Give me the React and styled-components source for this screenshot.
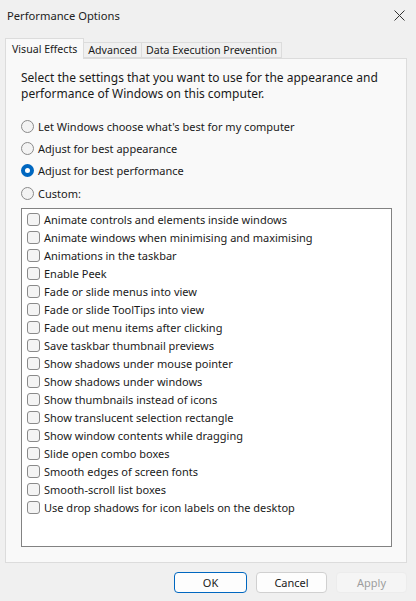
import React from 'react';
import styled, { createGlobalStyle } from 'styled-components';

const Global = createGlobalStyle`
  html, body { margin: 0; padding: 0; }
  body {
    width: 416px;
    height: 601px;
    overflow: hidden;
    background: #f0f0f0;
    font-family: "Noto Sans", "Segoe UI", sans-serif;
    font-size: 11px;
    color: #1a1a1a;
  }
`;

const Window = styled.div`
  width: 416px;
  height: 601px;
  display: flex;
  flex-direction: column;
  background: #f0f0f0;
  box-sizing: border-box;
`;

const TitleBar = styled.div`
  height: 31px;
  display: flex;
  align-items: center;
  justify-content: space-between;
  padding: 0 11px 0 7px;
  font-size: 11.2px;
  color: #222;
`;

const Close = styled.svg`
  width: 11px;
  height: 11px;
`;

const Body = styled.div`
  padding: 7px 9px 0 5px;
  display: flex;
  flex-direction: column;
`;

const Tabs = styled.div`
  display: flex;
  align-items: flex-end;
  height: 20px;
  position: relative;
  z-index: 1;
  font-size: 10.6px;
`;

const Tab = styled.div`
  height: ${p => (p.$active ? '21px' : '16px')};
  padding: 0 ${p => (p.$active ? '6px' : '4px')};
  margin-left: ${p => (p.$active ? '0' : '-1px')};
  margin-bottom: ${p => (p.$active ? '-1px' : '0')};
  display: flex;
  align-items: center;
  box-sizing: border-box;
  border: 1px solid #dcdcdc;
  border-bottom: ${p => (p.$active ? 'none' : '1px solid #dcdcdc')};
  background: ${p => (p.$active ? '#f9f9f9' : '#f0f0f0')};
  color: #1a1a1a;
`;

const Panel = styled.div`
  height: 505px;
  box-sizing: border-box;
  background: #f9f9f9;
  border: 1px solid #dcdcdc;
  padding: 11px 14px 0 15px;
  display: flex;
  flex-direction: column;
`;

const Intro = styled.p`
  margin: 0 0 13px;
  font-size: 12px;
  line-height: 16px;
`;

const RadioRow = styled.label`
  display: flex;
  align-items: center;
  height: 22.4px;
  gap: 4px;
`;

const Radio = styled.span`
  width: 13px;
  height: 13px;
  box-sizing: border-box;
  border-radius: 50%;
  border: ${p => (p.$on ? '4px solid #0067c0' : '1px solid #8a8a8a')};
  background: ${p => (p.$on ? '#fff' : '#f3f3f3')};
`;

const List = styled.div`
  margin-top: 3px;
  height: 339px;
  box-sizing: border-box;
  background: #fff;
  border: 1px solid #828282;
  padding: 2px 0 0 5px;
`;

const Item = styled.div`
  display: flex;
  align-items: center;
  height: 18px;
  gap: 4px;
`;

const Box = styled.span`
  width: 13px;
  height: 13px;
  box-sizing: border-box;
  border: 1px solid #8a8a8a;
  border-radius: 3px;
  background: #f4f4f4;
`;

const Footer = styled.div`
  display: flex;
  justify-content: flex-end;
  gap: 9px;
  padding: 9px 9px 0 0;
`;

const Button = styled.div`
  width: ${p => (p.$primary ? '73px' : '71px')};
  height: 21px;
  box-sizing: border-box;
  display: flex;
  align-items: center;
  justify-content: center;
  border-radius: 4px;
  border: 1px solid ${p => (p.$primary ? '#0067c0' : p.$disabled ? '#ececec' : '#d0d0d0')};
  background: ${p => (p.$disabled ? '#f5f5f5' : '#fdfdfd')};
  color: ${p => (p.$disabled ? '#9d9d9d' : '#1a1a1a')};
`;

const radios = [
  "Let Windows choose what's best for my computer",
  'Adjust for best appearance',
  'Adjust for best performance',
  'Custom:',
];

const items = [
  'Animate controls and elements inside windows',
  'Animate windows when minimising and maximising',
  'Animations in the taskbar',
  'Enable Peek',
  'Fade or slide menus into view',
  'Fade or slide ToolTips into view',
  'Fade out menu items after clicking',
  'Save taskbar thumbnail previews',
  'Show shadows under mouse pointer',
  'Show shadows under windows',
  'Show thumbnails instead of icons',
  'Show translucent selection rectangle',
  'Show window contents while dragging',
  'Slide open combo boxes',
  'Smooth edges of screen fonts',
  'Smooth-scroll list boxes',
  'Use drop shadows for icon labels on the desktop',
];

export default function App() {
  return (
    <>
      <Global />
      <Window>
        <TitleBar>
          <span>Performance Options</span>
          <Close viewBox="0 0 11 11">
            <path d="M0.5 0.5L10.5 10.5M10.5 0.5L0.5 10.5" stroke="#333" strokeWidth="1" />
          </Close>
        </TitleBar>
        <Body>
          <Tabs>
            <Tab $active>Visual Effects</Tab>
            <Tab>Advanced</Tab>
            <Tab>Data Execution Prevention</Tab>
          </Tabs>
          <Panel>
            <Intro>
              Select the settings that you want to use for the appearance and
              <br />
              performance of Windows on this computer.
            </Intro>
            {radios.map((r, i) => (
              <RadioRow key={r}>
                <Radio $on={i === 2} />
                {r}
              </RadioRow>
            ))}
            <List>
              {items.map(t => (
                <Item key={t}>
                  <Box />
                  {t}
                </Item>
              ))}
            </List>
          </Panel>
        </Body>
        <Footer>
          <Button $primary>OK</Button>
          <Button>Cancel</Button>
          <Button $disabled>Apply</Button>
        </Footer>
      </Window>
    </>
  );
}
